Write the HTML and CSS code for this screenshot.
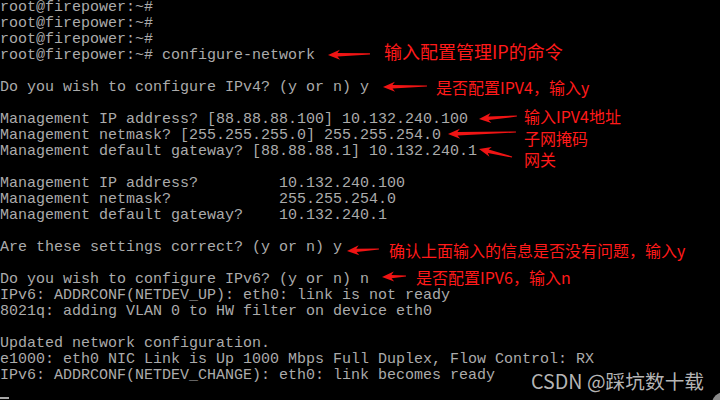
FILE: index.html
```html
<!DOCTYPE html>
<html lang="zh-CN">
<head>
<meta charset="utf-8">
<title>configure-network</title>
<link rel="stylesheet" href="styles.css">
</head>
<body>
<div class="screen">
<div class="term">
  <div class="ln"><span>root@firepower:~#</span></div>
  <div class="ln"><span>root@firepower:~#</span></div>
  <div class="ln"><span>root@firepower:~#</span></div>
  <div class="ln"><span>root@firepower:~# configure-network</span></div>
  <div class="ln"></div>
  <div class="ln"><span>Do you wish to configure IPv4? (y or n) y</span></div>
  <div class="ln"></div>
  <div class="ln"><span>Management IP address? [88.88.88.100] 10.132.240.100</span></div>
  <div class="ln"><span>Management netmask? [255.255.255.0] 255.255.254.0</span></div>
  <div class="ln"><span>Management default gateway? [88.88.88.1] 10.132.240.1</span></div>
  <div class="ln"></div>
  <div class="ln"><span>Management IP address?         10.132.240.100</span></div>
  <div class="ln"><span>Management netmask?            255.255.254.0</span></div>
  <div class="ln"><span>Management default gateway?    10.132.240.1</span></div>
  <div class="ln"></div>
  <div class="ln"><span>Are these settings correct? (y or n) y</span></div>
  <div class="ln"></div>
  <div class="ln"><span>Do you wish to configure IPv6? (y or n) n</span></div>
  <div class="ln"><span>IPv6: ADDRCONF(NETDEV_UP): eth0: link is not ready</span></div>
  <div class="ln"><span>8021q: adding VLAN 0 to HW filter on device eth0</span></div>
  <div class="ln"></div>
  <div class="ln"><span>Updated network configuration.</span></div>
  <div class="ln"><span>e1000: eth0 NIC Link is Up 1000 Mbps Full Duplex, Flow Control: RX</span></div>
  <div class="ln"><span>IPv6: ADDRCONF(NETDEV_CHANGE): eth0: link becomes ready</span></div>
  <div class="ln"><span class="cursor"></span></div>
</div>

<svg class="arrows" width="720" height="400" viewBox="0 0 720 400">
  <g fill="#f01414">
    <g transform="translate(328,55) rotate(-1.4)"><polygon points="0,0 12,-5 9.5,-1.7 42,-0.6 42,0.6 9.5,1.7 12,5"/></g>
    <g transform="translate(383,87) rotate(-1.3)"><polygon points="0,0 12,-5 9.5,-1.7 44,-0.6 44,0.6 9.5,1.7 12,5"/></g>
    <g transform="translate(479,119) rotate(-4.5)"><polygon points="0,0 12,-5 9.5,-1.7 38,-0.6 38,0.6 9.5,1.7 12,5"/></g>
    <g transform="translate(448,134) rotate(-1.7)"><polygon points="0,0 12,-5 9.5,-1.7 68,-0.6 68,0.6 9.5,1.7 12,5"/></g>
    <g transform="translate(479,149) rotate(13.6)"><polygon points="0,0 12,-5 9.5,-1.7 34,-0.6 34,0.6 9.5,1.7 12,5"/></g>
    <g transform="translate(347,251) rotate(-3.6)"><polygon points="0,0 12,-5 9.5,-1.7 32,-0.6 32,0.6 9.5,1.7 12,5"/></g>
    <g transform="translate(382,277) rotate(-2.4)"><polygon points="0,0 12,-5 9.5,-1.7 24,-0.6 24,0.6 9.5,1.7 12,5"/></g>
  </g>
</svg>

<div class="note note-big n1">输入配置管理IP的命令</div>
<div class="note n2">是否配置IPV4，输入y</div>
<div class="note n3">输入IPV4地址</div>
<div class="note n4">子网掩码</div>
<div class="note n5">网关</div>
<div class="note n6">确认上面输入的信息是否没有问题，输入y</div>
<div class="note n7">是否配置IPV6，输入n</div>

<div class="watermark">CSDN @踩坑数十载</div>
<div class="corner"></div>
</div>
</body>
</html>
```

FILE: styles.css
```css
html, body {
  margin: 0;
  padding: 0;
  background: #000;
}

.screen {
  position: relative;
  width: 720px;
  height: 400px;
  overflow: hidden;
  background: #000;
}

.term {
  display: flex;
  flex-direction: column;
  align-items: flex-start;
  font-family: "Liberation Mono", "DejaVu Sans Mono", monospace;
  font-size: 15px;
  line-height: 16px;
  color: #ababab;
}

.ln {
  height: 16px;
  white-space: pre;
}

.cursor {
  display: block;
  width: 9px;
  height: 2px;
  margin-top: 13px;
  background: #a8a8a8;
}

.arrows {
  position: absolute;
  left: 0;
  top: 0;
}

.note {
  position: absolute;
  font-family: "Noto Sans CJK SC", "Noto Sans", sans-serif;
  font-size: 16px;
  line-height: 16px;
  color: #ff1a1a;
  white-space: nowrap;
}

.note-big {
  font-size: 18px;
  line-height: 18px;
}

.n1 { left: 384px; top: 42px; }
.n2 { left: 436px; top: 79px; }
.n3 { left: 524px; top: 108px; }
.n4 { left: 524px; top: 130px; }
.n5 { left: 524px; top: 151px; }
.n6 { left: 389px; top: 242px; }
.n7 { left: 416px; top: 269px; }

.watermark {
  position: absolute;
  left: 531px;
  top: 371px;
  font-family: "Noto Sans CJK SC", "Noto Sans", sans-serif;
  font-size: 19.7px;
  line-height: 20px;
  color: rgba(215, 215, 215, 0.85);
  white-space: nowrap;
}

.corner {
  position: absolute;
  right: -4px;
  bottom: -4px;
  width: 12px;
  height: 12px;
  border-top-left-radius: 12px;
  background: #8a8a8a;
}
```
